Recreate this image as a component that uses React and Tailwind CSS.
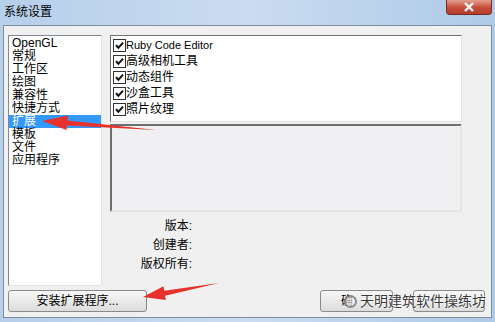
import React from "react";

const items = ["OpenGL", "常规", "工作区", "绘图", "兼容性", "快捷方式", "扩展", "模板", "文件", "应用程序"];
const extensions = ["Ruby Code Editor", "高级相机工具", "动态组件", "沙盒工具", "照片纹理"];

const CheckBox = () => (
  <span className="flex h-[13px] w-[13px] shrink-0 items-center justify-center border border-[#333] bg-white">
    <svg width="9" height="9" viewBox="0 0 9 9">
      <path d="M1 4.2 L3.4 6.8 L8 1.6" fill="none" stroke="#111" strokeWidth="2" />
    </svg>
  </span>
);

const Button = ({ children, className = "" }) => (
  <button
    className={`flex h-[22px] items-center justify-center rounded-[3px] border border-[#8a8a8a] bg-gradient-to-b from-[#f7f7f7] to-[#dcdcdc] text-[12px] text-black ${className}`}
  >
    {children}
  </button>
);

const App = () => {
  return (
    <div className="relative h-[322px] w-[495px] overflow-hidden bg-gradient-to-r from-[#b6cfea] via-[#cadcf0] to-[#aecae8] font-['Liberation_Sans','Noto_Sans_CJK_SC',sans-serif] text-[12px] text-black">
      {/* title bar */}
      <div className="flex h-[25px] items-start justify-between">
        <span className="pl-[4px] pt-[4px] leading-[16px]">系统设置</span>
        <div className="mr-[3px] flex h-[15px] w-[46px] items-center justify-center rounded-b-[4px] border border-t-0 border-[#7a2a25] bg-gradient-to-b from-[#e2a08f] via-[#c8503e] to-[#b63b2b]">
          <svg width="12" height="10" viewBox="0 0 12 10">
            <path d="M2 1 L10 9 M10 1 L2 9" stroke="#fff" strokeWidth="2.4" />
          </svg>
        </div>
      </div>

      {/* client area */}
      <div className="mx-[3px] flex h-[293px] flex-col border border-[#7f8c9b] bg-[#f0f0f0] px-[4px] pt-[9px]">
        <div className="flex h-[251px] gap-[8px]">
          <div className="h-full w-[94px] border border-[#e3e3e3] border-l-[#828790] border-t-[#828790] bg-white pt-[1px]">
            {items.map((it) => (
              <div
                key={it}
                className={`h-[13px] pl-[3px] leading-[13px] ${it === "扩展" ? "bg-[#3399ff] text-white" : ""}`}
              >
                {it}
              </div>
            ))}
          </div>

          <div className="flex w-[352px] flex-col">
            <div className="h-[87px] border border-[#e3e3e3] border-l-[#707070] border-t-[#707070] bg-white pl-[2px] pt-[1px]">
              {extensions.map((e) => (
                <div key={e} className="flex h-[16px] items-center">
                  <CheckBox />
                  <span className={e.startsWith("Ruby") ? "text-[11px]" : "text-[12px]"}>{e}</span>
                </div>
              ))}
            </div>
            <div className="mt-[2px] h-[88px] border-2 border-[#e6e6e6] border-l-[#6f6f6f] border-t-[#6f6f6f] bg-[#f0eff1]" />
            <div className="mt-[5px] w-[82px] text-right">
              <div className="h-[19px] leading-[19px]">版本:</div>
              <div className="h-[19px] leading-[19px]">创建者:</div>
              <div className="h-[19px] leading-[19px]">版权所有:</div>
            </div>
          </div>
        </div>

        <div className="mt-[4px] flex">
          <Button className="w-[139px]">安装扩展程序...</Button>
          <Button className="ml-[173px] w-[73px] justify-start pl-[20px]">确</Button>
          <Button className="ml-[20px] w-[72px]" />
        </div>
      </div>

      {/* watermark */}
      <div className="pointer-events-none absolute left-[344px] top-[291px] flex items-center gap-[3px] text-[14px] text-[#3a3a3a] [text-shadow:0_0_2px_#fff,0_0_2px_#fff]">
        <span className="h-[13px] w-[13px] rounded-full border-2 border-[#8a8a8a] bg-white/60" />
        <span>天明建筑软件操练坊</span>
      </div>

      {/* red arrows */}
      <svg className="pointer-events-none absolute left-0 top-0" width="495" height="322" viewBox="0 0 495 322">
        <polygon
          points="156,130 67.4,120.6 68,115.5 42,121 66.6,130 66.9,125.6"
          fill="#e8302c"
        />
        <polygon
          points="219,283 164.3,290.7 163.5,286.3 143,297 165.9,300.1 165.1,295.7"
          fill="#e8302c"
        />
      </svg>
    </div>
  );
};

export default App;
